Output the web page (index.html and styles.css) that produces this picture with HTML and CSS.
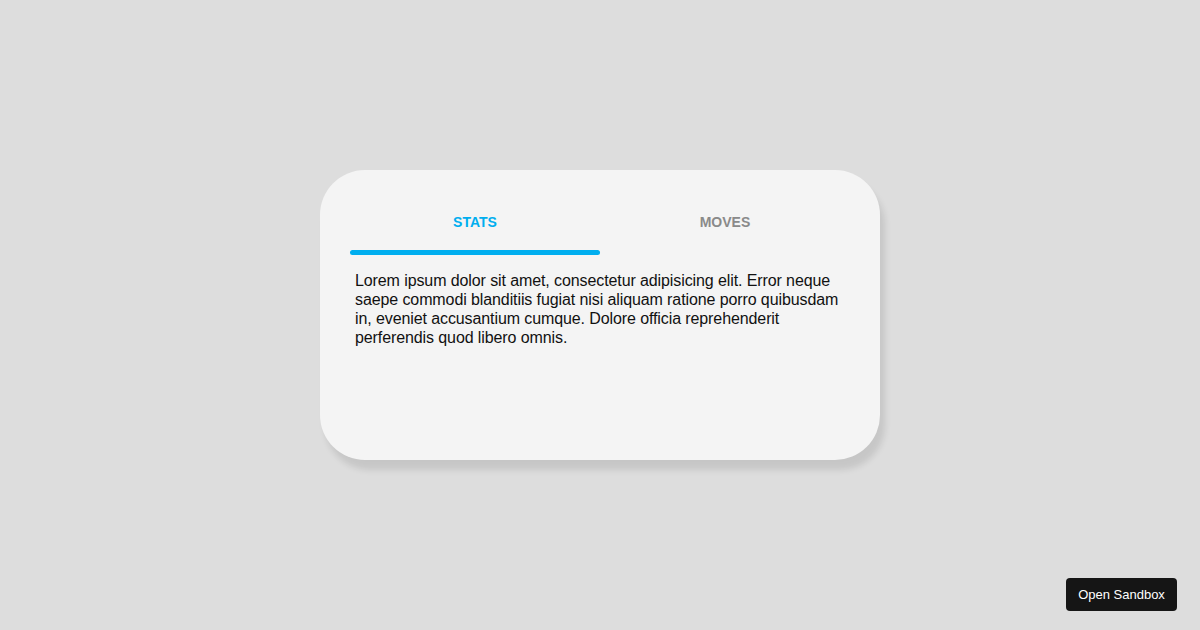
FILE: index.html
```html
<!DOCTYPE html>
<html>
<head>
<meta charset="utf-8">
<link rel="stylesheet" href="styles.css">
</head>
<body>
<main class="stage">
  <section class="card">
    <nav class="tabs">
      <button class="tab active">STATS</button>
      <button class="tab">MOVES</button>
    </nav>
    <div class="indicator-track"><span class="indicator"></span></div>
    <p class="content">Lorem ipsum dolor sit amet, consectetur adipisicing elit. Error neque saepe commodi blanditiis fugiat nisi aliquam ratione porro quibusdam in, eveniet accusantium cumque. Dolore officia reprehenderit perferendis quod libero omnis.</p>
  </section>
</main>
<a class="sandbox-btn">Open Sandbox</a>
</body>
</html>
```
FILE: styles.css
```css
html, body {
  margin: 0;
  padding: 0;
  height: 100%;
}
body {
  background: #dddddd;
  font-family: "Liberation Sans", Arial, sans-serif;
}
.stage {
  height: 630px;
  display: flex;
  align-items: center;
  justify-content: center;
}
.card {
  width: 560px;
  height: 290px;
  box-sizing: border-box;
  padding: 30px;
  background: #f4f4f4;
  border-radius: 45px;
  box-shadow: 5px 10px 6px rgba(0, 0, 0, 0.1);
}
.tabs {
  display: flex;
  height: 50px;
}
.tab {
  flex: 1;
  border: none;
  background: none;
  padding: 13px 0 0;
  margin: 0;
  align-self: flex-start;
  font-family: "Liberation Sans", Arial, sans-serif;
  font-weight: bold;
  font-size: 14px;
  line-height: 18px;
  color: #8a8a8a;
  cursor: pointer;
}
.tab.active {
  color: #00aeef;
}
.indicator-track {
  display: flex;
  height: 5px;
}
.indicator {
  width: 250px;
  height: 5px;
  border-radius: 3px;
  background: #00aeef;
}
.content {
  margin: 16px 0 0;
  padding: 0 5px;
  font-size: 16px;
  line-height: 19px;
  letter-spacing: -0.1px;
  color: #111;
}
.sandbox-btn {
  position: fixed;
  right: 23px;
  bottom: 19px;
  width: 111px;
  height: 33px;
  display: flex;
  align-items: center;
  justify-content: center;
  background: #151515;
  color: #ffffff;
  border-radius: 4px;
  font-size: 13px;
  font-family: "Liberation Sans", Arial, sans-serif;
}
```
